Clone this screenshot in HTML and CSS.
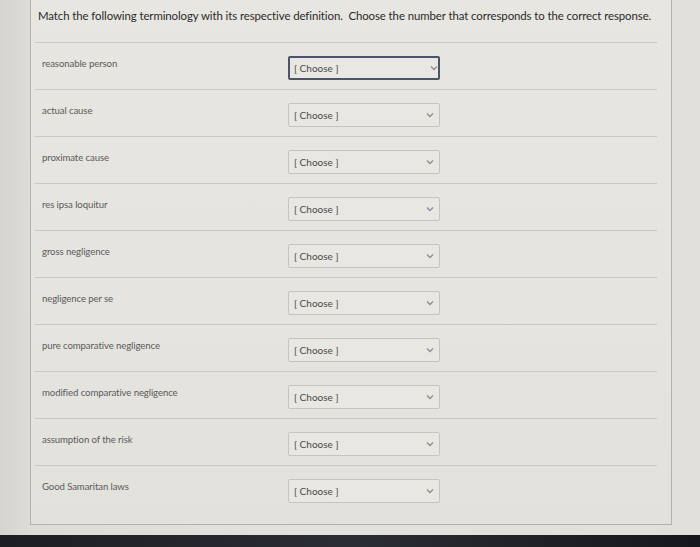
FILE: index.html
```html
<!DOCTYPE html>
<html>
<head>
<meta charset="utf-8">
<link rel="stylesheet" href="styles.css">
</head>
<body>
<div class="screen">
  <div class="card">
    <p class="title">Match the following terminology with its respective definition.&nbsp; Choose the number that corresponds to the correct response.</p>
    <div class="rows">
      <div class="row"><span class="term">reasonable person</span><div class="select focused"><span>[ Choose ]</span><svg class="chev" viewBox="0 0 8 6" width="8" height="6"><path d="M1 1.5 L4 4.5 L7 1.5" fill="none" stroke="#8a8d96" stroke-width="1.3"/></svg></div></div>
      <div class="row"><span class="term">actual cause</span><div class="select"><span>[ Choose ]</span><svg class="chev" viewBox="0 0 8 6" width="8" height="6"><path d="M1 1.5 L4 4.5 L7 1.5" fill="none" stroke="#8a8d96" stroke-width="1.3"/></svg></div></div>
      <div class="row"><span class="term">proximate cause</span><div class="select"><span>[ Choose ]</span><svg class="chev" viewBox="0 0 8 6" width="8" height="6"><path d="M1 1.5 L4 4.5 L7 1.5" fill="none" stroke="#8a8d96" stroke-width="1.3"/></svg></div></div>
      <div class="row"><span class="term">res ipsa loquitur</span><div class="select"><span>[ Choose ]</span><svg class="chev" viewBox="0 0 8 6" width="8" height="6"><path d="M1 1.5 L4 4.5 L7 1.5" fill="none" stroke="#8a8d96" stroke-width="1.3"/></svg></div></div>
      <div class="row"><span class="term">gross negligence</span><div class="select"><span>[ Choose ]</span><svg class="chev" viewBox="0 0 8 6" width="8" height="6"><path d="M1 1.5 L4 4.5 L7 1.5" fill="none" stroke="#8a8d96" stroke-width="1.3"/></svg></div></div>
      <div class="row"><span class="term">negligence per se</span><div class="select"><span>[ Choose ]</span><svg class="chev" viewBox="0 0 8 6" width="8" height="6"><path d="M1 1.5 L4 4.5 L7 1.5" fill="none" stroke="#8a8d96" stroke-width="1.3"/></svg></div></div>
      <div class="row"><span class="term">pure comparative negligence</span><div class="select"><span>[ Choose ]</span><svg class="chev" viewBox="0 0 8 6" width="8" height="6"><path d="M1 1.5 L4 4.5 L7 1.5" fill="none" stroke="#8a8d96" stroke-width="1.3"/></svg></div></div>
      <div class="row"><span class="term">modified comparative negligence</span><div class="select"><span>[ Choose ]</span><svg class="chev" viewBox="0 0 8 6" width="8" height="6"><path d="M1 1.5 L4 4.5 L7 1.5" fill="none" stroke="#8a8d96" stroke-width="1.3"/></svg></div></div>
      <div class="row"><span class="term">assumption of the risk</span><div class="select"><span>[ Choose ]</span><svg class="chev" viewBox="0 0 8 6" width="8" height="6"><path d="M1 1.5 L4 4.5 L7 1.5" fill="none" stroke="#8a8d96" stroke-width="1.3"/></svg></div></div>
      <div class="row last"><span class="term">Good Samaritan laws</span><div class="select"><span>[ Choose ]</span><svg class="chev" viewBox="0 0 8 6" width="8" height="6"><path d="M1 1.5 L4 4.5 L7 1.5" fill="none" stroke="#8a8d96" stroke-width="1.3"/></svg></div></div>
    </div>
  </div>
</div>
<div class="bezel"></div>
</body>
</html>
```
FILE: styles.css
```css
html, body {
  margin: 0;
  padding: 0;
  height: 547px;
  overflow: hidden;
}
body {
  background: #dddbd6;
  font-family: Lato, "Open Sans", sans-serif;
  display: flex;
  flex-direction: column;
}
.screen {
  height: 535px;
  padding-left: 30px;
  box-sizing: border-box;
  background: linear-gradient(90deg, #d6d4cf 0, #dedcd7 30px, #e4e2dd 300px, #e2e0db 100%);
}
.card {
  width: 642px;
  height: 525px;
  box-sizing: border-box;
  border: 1px solid #b4b2ad;
  border-top: none;
  background: linear-gradient(180deg, #e8e6e1 0, #e6e4df 60%, #e3e1dc 100%);
  padding: 0 14px 0 4px;
}
.title {
  margin: 0;
  padding: 9px 0 0 3px;
  height: 42px;
  box-sizing: border-box;
  font-size: 11.4px;
  color: #2a2a2c;
  white-space: nowrap;
  letter-spacing: -0.08px;
}
.row {
  height: 47px;
  box-sizing: border-box;
  border-top: 1px solid #cac8c3;
  display: flex;
  align-items: flex-start;
  padding-left: 7px;
}
.row.last {
  height: 60px;
}
.term {
  width: 246px;
  padding-top: 15px;
  font-size: 9.6px;
  color: #5a5a5c;
  letter-spacing: -0.1px;
}
.select {
  margin-top: 13px;
  width: 152px;
  height: 24px;
  box-sizing: border-box;
  border: 1px solid #c6c4bf;
  border-radius: 2px;
  background: #e9e7e2;
  display: flex;
  align-items: center;
  justify-content: space-between;
  padding: 0 5px 0 5px;
  font-size: 10px;
  color: #48494d;
}
.select.focused {
  border: 2px solid #4b5468;
  padding-left: 4px;
  padding-right: 0;
}
.chev {
  display: block;
}
.bezel {
  flex: 1;
  background: linear-gradient(90deg, #1c1e23 0, #2a2d33 50%, #15171b 100%);
}
```
